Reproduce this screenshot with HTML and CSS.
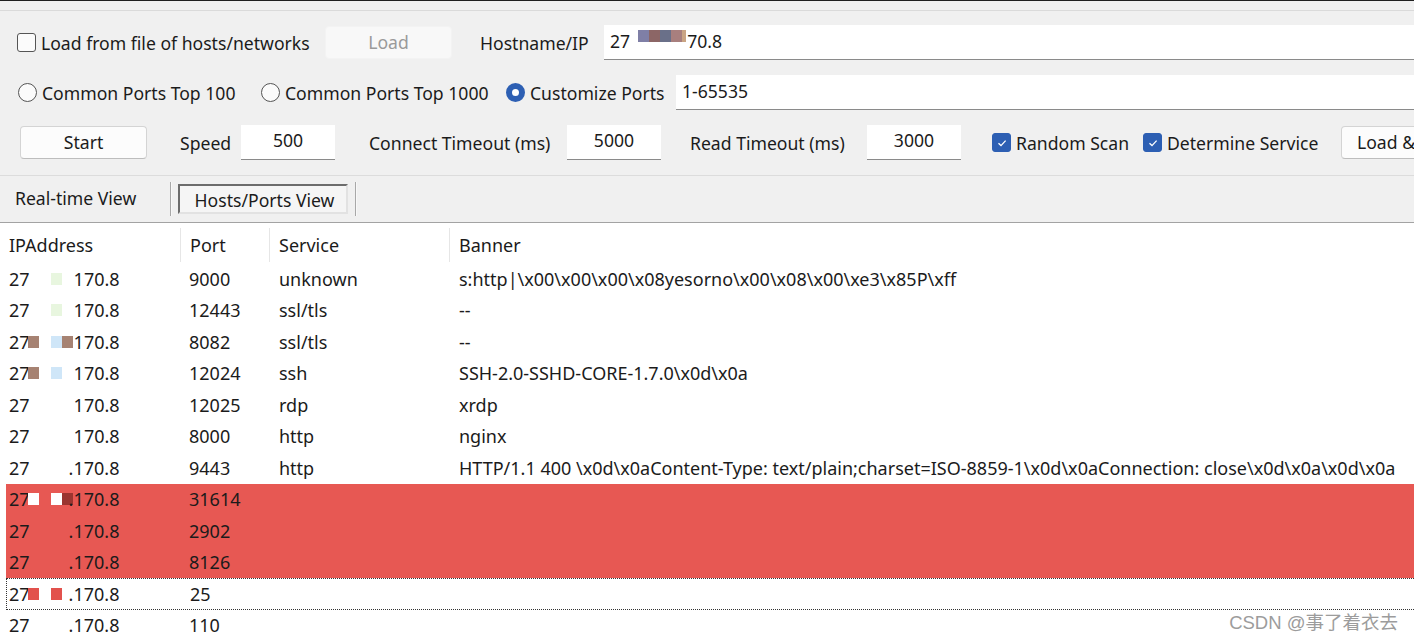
FILE: index.html
```html
<!DOCTYPE html>
<html>
<head>
<meta charset="utf-8">
<link rel="stylesheet" href="styles.css">
</head>
<body>
<div class="app">
  <div class="topbar"></div>
  <div class="controls">
    <div class="row">
      <label class="opt w-loadfile"><span class="box"></span><span>Load from file of hosts/networks</span></label>
      <button class="btn btn-disabled w-btn">Load</button>
      <span class="lbl w-host">Hostname/IP</span>
      <div class="field field-wide">27<span class="mask mask-host"><i class="m1"></i><i class="m2"></i><i class="m3"></i><i class="m4"></i><i class="m5"></i></span>70.8</div>
    </div>
    <div class="row">
      <label class="opt w-r1"><span class="radio"></span><span>Common Ports Top 100</span></label>
      <label class="opt w-r2"><span class="radio"></span><span>Common Ports Top 1000</span></label>
      <label class="opt w-r3"><span class="radio radio-on"></span><span>Customize Ports</span></label>
      <div class="field field-wide">1-65535</div>
    </div>
    <div class="row">
      <button class="btn w-btn btn-start">Start</button>
      <span class="lbl w-speed">Speed</span>
      <div class="field field-num">500</div>
      <span class="lbl w-conn">Connect Timeout (ms)</span>
      <div class="field field-num">5000</div>
      <span class="lbl w-read">Read Timeout (ms)</span>
      <div class="field field-num">3000</div>
      <label class="opt w-rand"><span class="box box-on"><svg viewBox="0 0 12 12" width="12" height="12"><path d="M2.5 6.3 L5 8.6 L9.6 3.6" fill="none" stroke="#fff" stroke-width="1.3"/></svg></span><span>Random Scan</span></label>
      <label class="opt w-det"><span class="box box-on"><svg viewBox="0 0 12 12" width="12" height="12"><path d="M2.5 6.3 L5 8.6 L9.6 3.6" fill="none" stroke="#fff" stroke-width="1.3"/></svg></span><span>Determine Service</span></label>
      <button class="btn btn-loadsave">Load &amp;</button>
    </div>
  </div>
  <div class="tabs">
    <span class="tab-plain">Real-time View</span>
    <span class="tab-sep"></span>
    <span class="tab-active">Hosts/Ports View</span>
    <span class="tab-sep"></span>
  </div>
  <div class="table">
    <div class="thead">
      <div class="hcell hc-first"><span>IPAddress</span></div>
      <div class="hcell"><span>Port</span></div>
      <div class="hcell"><span>Service</span></div>
      <div class="hcell"><span>Banner</span></div>
    </div>
    <div class="trow">
      <div class="cell c-ip">27<span class="mask"><i class="s-lg" style="margin-left:21px"></i></span>170.8</div>
      <div class="cell c-port">9000</div>
      <div class="cell c-svc">unknown</div>
      <div class="cell c-ban">s:http|\x00\x00\x00\x08yesorno\x00\x08\x00\xe3\x85P\xff</div>
    </div>
    <div class="trow">
      <div class="cell c-ip">27<span class="mask"><i class="s-lg" style="margin-left:21px"></i></span>170.8</div>
      <div class="cell c-port">12443</div>
      <div class="cell c-svc">ssl/tls</div>
      <div class="cell c-ban">--</div>
    </div>
    <div class="trow">
      <div class="cell c-ip">27<span class="mask"><i class="s-br"></i><i class="s-lb" style="margin-left:12px"></i><i class="s-br"></i></span>170.8</div>
      <div class="cell c-port">8082</div>
      <div class="cell c-svc">ssl/tls</div>
      <div class="cell c-ban">--</div>
    </div>
    <div class="trow">
      <div class="cell c-ip">27<span class="mask"><i class="s-br"></i><i class="s-lb" style="margin-left:12px"></i></span>170.8</div>
      <div class="cell c-port">12024</div>
      <div class="cell c-svc">ssh</div>
      <div class="cell c-ban">SSH-2.0-SSHD-CORE-1.7.0\x0d\x0a</div>
    </div>
    <div class="trow">
      <div class="cell c-ip">27<span class="mask"></span>170.8</div>
      <div class="cell c-port">12025</div>
      <div class="cell c-svc">rdp</div>
      <div class="cell c-ban">xrdp</div>
    </div>
    <div class="trow">
      <div class="cell c-ip">27<span class="mask"></span>170.8</div>
      <div class="cell c-port">8000</div>
      <div class="cell c-svc">http</div>
      <div class="cell c-ban">nginx</div>
    </div>
    <div class="trow">
      <div class="cell c-ip">27<span class="mask mask-dot"></span>.170.8</div>
      <div class="cell c-port">9443</div>
      <div class="cell c-svc">http</div>
      <div class="cell c-ban">HTTP/1.1 400 \x0d\x0aContent-Type: text/plain;charset=ISO-8859-1\x0d\x0aConnection: close\x0d\x0a\x0d\x0a</div>
    </div>
    <div class="trow trow-red">
      <div class="cell c-ip">27<span class="mask mask-dot"><i class="s-wh"></i><i class="s-wh" style="margin-left:12px"></i><i class="s-dr"></i></span>.170.8</div>
      <div class="cell c-port">31614</div>
      <div class="cell c-svc"></div>
      <div class="cell c-ban"></div>
    </div>
    <div class="trow trow-red">
      <div class="cell c-ip">27<span class="mask mask-dot"></span>.170.8</div>
      <div class="cell c-port">2902</div>
      <div class="cell c-svc"></div>
      <div class="cell c-ban"></div>
    </div>
    <div class="trow trow-red">
      <div class="cell c-ip">27<span class="mask mask-dot"></span>.170.8</div>
      <div class="cell c-port">8126</div>
      <div class="cell c-svc"></div>
      <div class="cell c-ban"></div>
    </div>
    <div class="trow trow-focus">
      <div class="cell c-ip">27<span class="mask mask-dot"><i class="s-rd"></i><i class="s-rd" style="margin-left:12px"></i></span>.170.8</div>
      <div class="cell c-port">25</div>
      <div class="cell c-svc"></div>
      <div class="cell c-ban"></div>
    </div>
    <div class="trow">
      <div class="cell c-ip">27<span class="mask mask-dot"></span>.170.8</div>
      <div class="cell c-port">110</div>
      <div class="cell c-svc"></div>
      <div class="cell c-ban"></div>
    </div>
    <div class="watermark">CSDN @事了着衣去</div>
  </div>
</div>
</body>
</html>
```

FILE: styles.css
```css
html, body {
  margin: 0;
  padding: 0;
}
body {
  width: 1414px;
  height: 641px;
  overflow: hidden;
  background: #f0f0f0;
  font-family: "Noto Sans", "Open Sans", sans-serif;
  font-size: 17.6px;
  color: #1b1b1b;
}
.app {
  width: 1414px;
  height: 641px;
  display: flex;
  flex-direction: column;
  overflow: hidden;
}
.topbar {
  height: 9px;
  border-top: 1px solid #1f1f1f;
  border-bottom: 1px solid #dadada;
  background: #f0f0f0;
  flex: none;
}
.controls {
  padding: 14px 0 15px 17px;
  display: flex;
  flex-direction: column;
  gap: 15px;
  border-bottom: 1px solid #dcdcdc;
  flex: none;
}
.row {
  height: 35px;
  display: flex;
  align-items: center;
  white-space: nowrap;
}
.opt {
  display: flex;
  align-items: center;
  gap: 5px;
  flex: none;
}
.box {
  width: 17px;
  height: 17px;
  border: 1px solid #555;
  border-radius: 3px;
  background: #fbfbfb;
  box-sizing: content-box;
  display: flex;
  align-items: center;
  justify-content: center;
  flex: none;
}
.box-on {
  background: #2d5fb3;
  border-color: #2d5fb3;
}
.radio {
  border: 1px solid #555;
  border-radius: 50%;
  background: #fbfbfb;
  flex: none;
  margin-left: 1px;
  box-sizing: border-box;
  width: 19px;
  height: 19px;
}
.radio-on {
  background: #fff;
  border: 6px solid #2d5fb3;
}
.w-loadfile { width: 308px; }
.w-r1 { width: 243px; }
.w-r2 { width: 245px; }
.w-r3 { width: 171px; }
.w-rand { width: 151px; margin-left: 31px; }
.w-det { width: 198px; }
.lbl { flex: none; }
.w-host { width: 124px; margin-left: 28px; }
.w-speed { width: 61px; margin-left: 33px; }
.w-conn { width: 198px; margin-left: 34px; }
.w-read { width: 177px; margin-left: 29px; }
.btn {
  font-family: inherit;
  font-size: 17.6px;
  color: #1b1b1b;
  height: 33px;
  background: #fcfcfc;
  border: 1px solid #d4d4d4;
  border-bottom-color: #bdbdbd;
  border-radius: 4px;
  padding: 0 0 2px;
  flex: none;
}
.w-btn { width: 127px; }
.btn-start { margin-left: 3px; }
.btn-disabled {
  background: #f8f8f8;
  border-color: #f3f3f3;
  color: #9a9a9a;
}
.btn-loadsave {
  width: 120px;
  text-align: left;
  padding-left: 15px;
}
.field {
  height: 35px;
  background: #fff;
  border-bottom: 1px solid #8a8a8a;
  box-sizing: border-box;
  padding: 2px 6px 0;
  line-height: 28px;
  flex: none;
  display: flex;
  align-items: flex-start;
}
.field-wide {
  width: 900px;
}
.field-num {
  width: 94px;
  justify-content: center;
  padding: 0;
  line-height: 30px;
}
.mask {
  display: inline-flex;
  width: 44px;
  height: 20px;
  align-items: center;
  flex: none;
}
.mask-dot { width: 39px; }
.mask-host {
  height: 28px;
  align-items: flex-start;
  padding-top: 3px;
  box-sizing: border-box;
  width: 57px;
}
.mask i {
  display: inline-block;
  width: 11px;
  height: 12px;
  flex: none;
}
.mask-host .m1 { background: #7f7fa6; margin-left: 8px; }
.mask-host .m2 { background: #8c6666; }
.mask-host .m3 { background: #6a7089; }
.mask-host .m4 { background: #a87f7e; }
.mask-host .m5 { background: #caa483; width: 4px; }
.s-lg { background: #e8f6df; }
.s-br { background: #a68272; }
.mask .s-br:first-child { margin-left: -2px; }
.s-lb { background: #cfe6f8; }
.s-wh { background: #fff; }
.mask .s-wh:first-child { margin-left: -2px; }
.s-dr { background: #9a3530; }
.s-rd { background: #e2524d; }
.mask .s-rd:first-child { margin-left: -2px; }

.tabs {
  height: 46px;
  display: flex;
  align-items: center;
  padding-left: 15px;
  border-bottom: 1px solid #a3a3a3;
  flex: none;
}
.tab-plain {
  width: 155px;
  padding-bottom: 3px;
}
.tab-sep {
  width: 1px;
  height: 34px;
  background: #a8a8a8;
  border-right: 1px solid #f8f8f8;
  margin-right: 6px;
}
.tab-active {
  width: 170px;
  height: 30px;
  box-sizing: border-box;
  border: 2px solid #e2e2e2;
  border-top-color: #6c6c6c;
  border-left-color: #6c6c6c;
  background: #f5f5f5;
  display: flex;
  align-items: center;
  justify-content: center;
  margin-right: 7px;
  padding-top: 1px;
  padding-left: 3px;
}

.table {
  flex: 1;
  background: #fff;
  position: relative;
  overflow: hidden;
  font-size: 18px;
}
.thead {
  height: 40px;
  display: grid;
  grid-template-columns: 174px 89px 180px 1fr;
  margin-left: 6px;
}
.hcell {
  padding-top: 5px;
  box-sizing: border-box;
}
.hcell span {
  display: flex;
  align-items: center;
  height: 34px;
  border-left: 1px solid #e6e6e6;
  padding-left: 9px;
}
.hc-first span {
  border-left: none;
  padding-left: 3px;
}
.trow {
  height: 31.5px;
  display: grid;
  grid-template-columns: 174px 89px 180px 1fr;
  margin-left: 6px;
  white-space: nowrap;
  box-sizing: border-box;
}
.trow-red {
  background: #e75853;
}
.trow-focus {
  border: 1px dotted #333;
  border-right: none;
}
.cell {
  display: flex;
  align-items: center;
  overflow: hidden;
}
.c-ip { padding-left: 3px; }
.c-port { padding-left: 9px; }
.c-svc { padding-left: 10px; }
.c-ban { padding-left: 10px; }
.trow-focus .c-ip { padding-left: 2px; }
.watermark {
  position: absolute;
  right: 16px;
  bottom: 7px;
  font-family: "Liberation Sans", "Noto Sans CJK SC", sans-serif;
  font-size: 18.5px;
  color: #9c9c9c;
}
```
